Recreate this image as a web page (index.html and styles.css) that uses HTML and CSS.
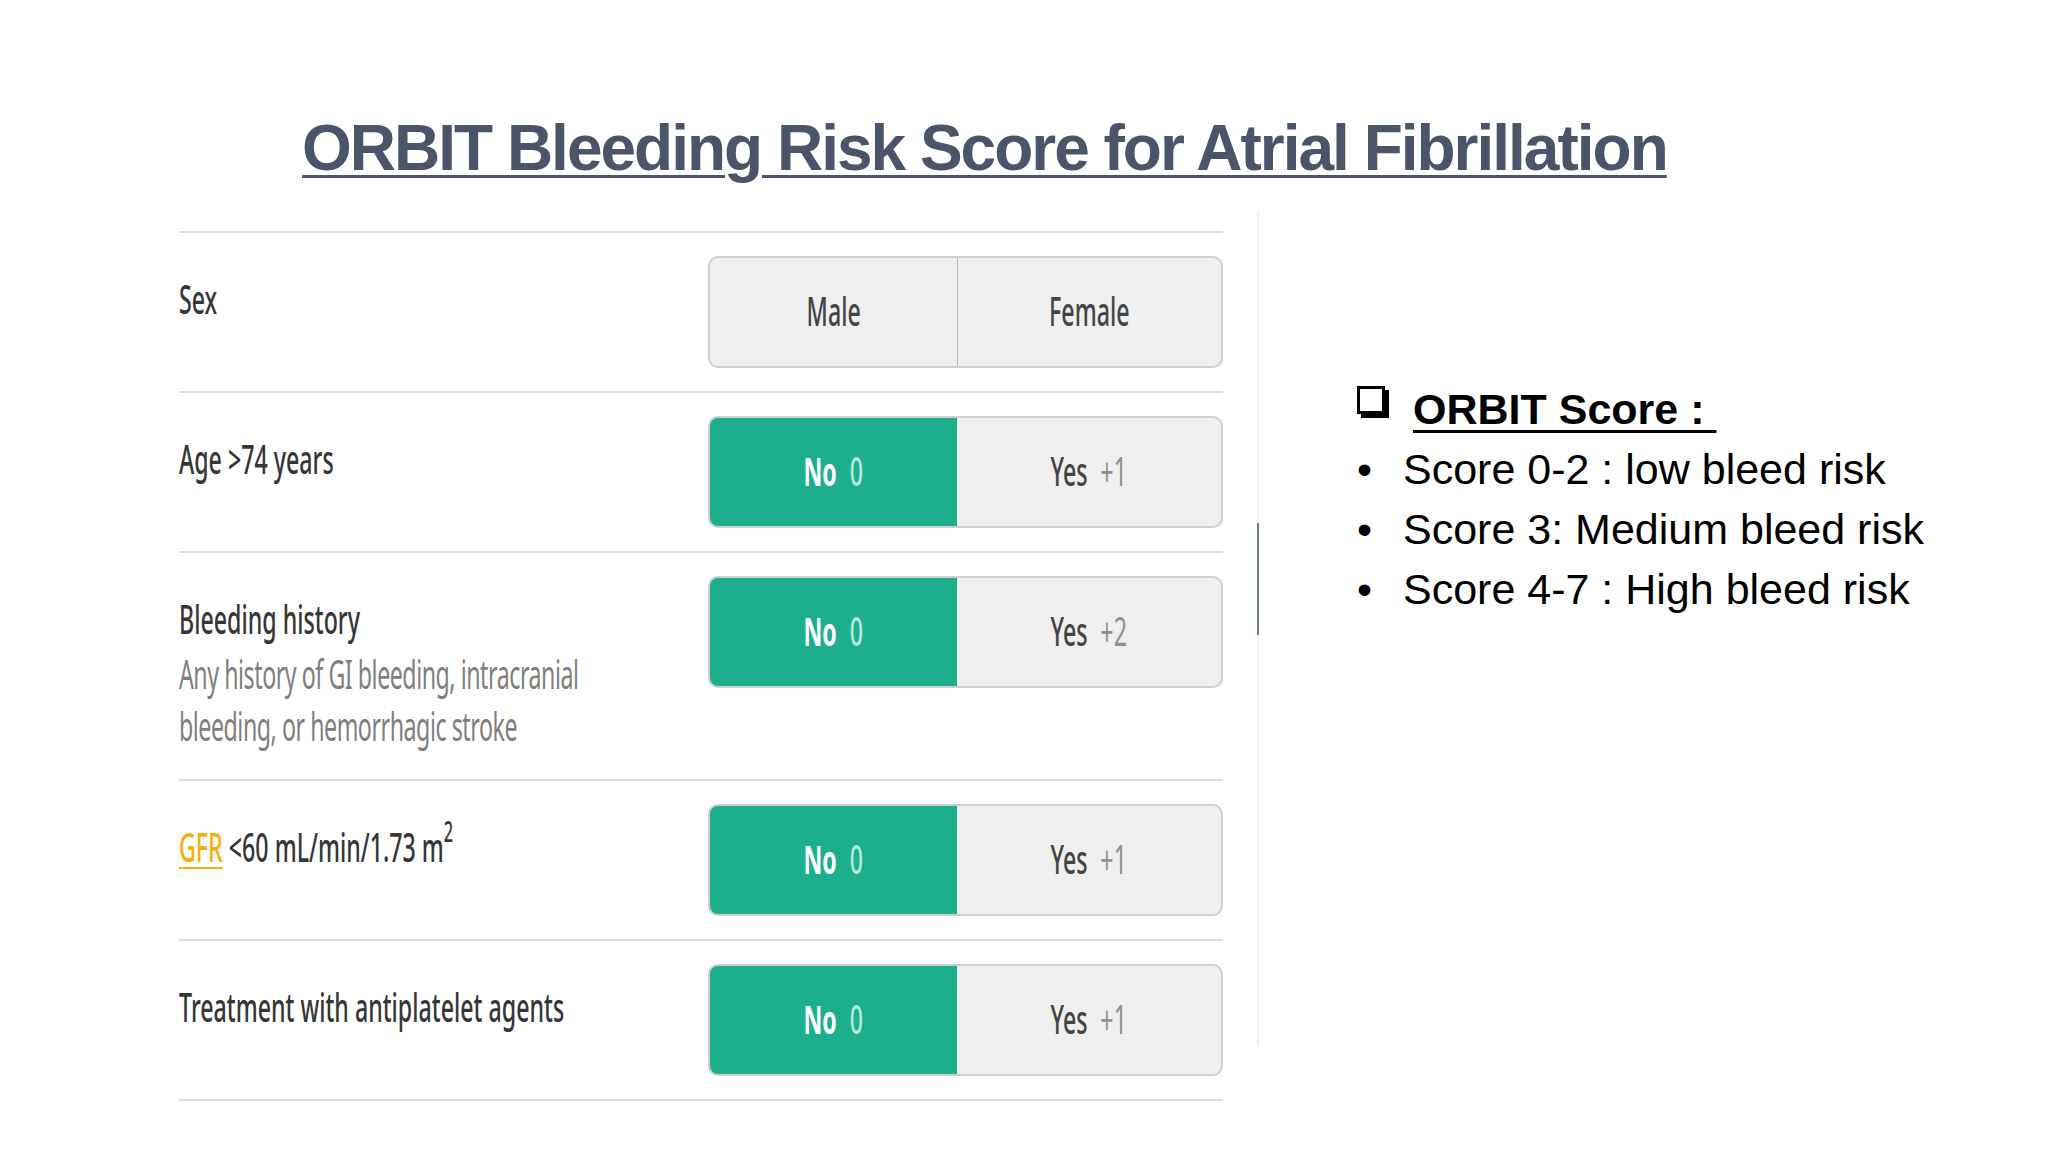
FILE: index.html
```html
<!DOCTYPE html>
<html lang="en">
<head>
<meta charset="utf-8">
<title>ORBIT Bleeding Risk Score for Atrial Fibrillation</title>
<link rel="stylesheet" href="styles.css">
</head>
<body>
<main class="slide">
  <h1 class="title">ORBIT Bleeding Risk Score for Atrial Fibrillation</h1>
  <div class="content">
    <section class="calc">
      <div class="row">
        <div class="label"><div class="name">Sex</div></div>
        <div class="toggle">
          <div class="opt"><span class="t">Male</span></div>
          <div class="opt sep"><span class="t">Female</span></div>
        </div>
      </div>
      <div class="row">
        <div class="label"><div class="name">Age &gt;74 years</div></div>
        <div class="toggle">
          <div class="opt on"><span class="t">No<span class="pts">0</span></span></div>
          <div class="opt"><span class="t">Yes<span class="pts">+1</span></span></div>
        </div>
      </div>
      <div class="row">
        <div class="label">
          <div class="name">Bleeding history</div>
          <div class="sub">Any history of GI bleeding, intracranial<br>bleeding, or hemorrhagic stroke</div>
        </div>
        <div class="toggle">
          <div class="opt on"><span class="t">No<span class="pts">0</span></span></div>
          <div class="opt"><span class="t">Yes<span class="pts">+2</span></span></div>
        </div>
      </div>
      <div class="row">
        <div class="label"><div class="name"><a class="link">GFR</a> &lt;60 mL/min/1.73 m<sup>2</sup></div></div>
        <div class="toggle">
          <div class="opt on"><span class="t">No<span class="pts">0</span></span></div>
          <div class="opt"><span class="t">Yes<span class="pts">+1</span></span></div>
        </div>
      </div>
      <div class="row">
        <div class="label"><div class="name">Treatment with antiplatelet agents</div></div>
        <div class="toggle">
          <div class="opt on"><span class="t">No<span class="pts">0</span></span></div>
          <div class="opt"><span class="t">Yes<span class="pts">+1</span></span></div>
        </div>
      </div>
    </section>
    <div class="divider"><span class="thumb"></span></div>
    <section class="notes">
      <h2 class="notes-head"><span class="box"></span><span class="u">ORBIT Score :&nbsp;</span></h2>
      <ul class="list">
        <li><span class="dot">•</span><span>Score 0-2 : low bleed risk</span></li>
        <li><span class="dot">•</span><span>Score 3: Medium bleed risk</span></li>
        <li><span class="dot">•</span><span>Score 4-7 : High bleed risk</span></li>
      </ul>
    </section>
  </div>
</main>
</body>
</html>
```
FILE: styles.css
```css
html, body {
  margin: 0;
  background: #ffffff;
}
body {
  width: 2048px;
  height: 1152px;
  overflow: hidden;
}
.slide {
  width: 2048px;
  height: 1152px;
}
.title {
  margin: 0;
  padding: 116px 0 0 302px;
  font-family: "Liberation Sans", Arial, sans-serif;
  font-weight: 700;
  font-size: 64px;
  line-height: 64px;
  letter-spacing: -2px;
  color: #4b5569;
  text-decoration: underline;
  text-decoration-thickness: 3px;
  text-underline-offset: 5px;
}
.content {
  display: flex;
  align-items: flex-start;
  margin-top: 31px;
  padding-left: 179px;
}
.calc {
  width: 1044px;
  margin-top: 20px;
  border-bottom: 2px solid #dedede;
  font-family: "Noto Sans", "Open Sans", sans-serif;
}
.row {
  display: flex;
  align-items: flex-start;
  border-top: 2px solid #dedede;
}
.label {
  flex: 1 1 0;
  min-width: 0;
  padding: 38px 0 27px;
  font-size: 40px;
  line-height: 55px;
  color: #363636;
  white-space: nowrap;
  transform: scaleX(0.58);
  transform-origin: 0 0;
}
.name {
  font-weight: 500;
}
.sub {
  margin-top: 2px;
  line-height: 52px;
  letter-spacing: -0.8px;
  color: #7f7f7f;
}
.link {
  color: #f2b10c;
  text-decoration: underline;
  text-decoration-thickness: 2px;
  text-underline-offset: 5px;
}
sup {
  font-size: 28px;
  line-height: 0;
  vertical-align: 20px;
}
.toggle {
  flex: 0 0 auto;
  display: flex;
  box-sizing: border-box;
  width: 515px;
  height: 112px;
  margin: 23px 0;
  border: 2px solid #cfcfcf;
  border-radius: 10px;
  overflow: hidden;
  background: #efefef;
}
.opt {
  display: flex;
  align-items: center;
  justify-content: center;
  padding-bottom: 4px;
  box-sizing: border-box;
  font-size: 40px;
  font-weight: 500;
  color: #444444;
}
.opt:first-child {
  width: 247px;
}
.opt:last-child {
  flex: 1;
}
.t {
  display: inline-block;
  white-space: nowrap;
  transform: scaleX(0.58);
}
.sep {
  border-left: 1px solid #bdbdbd;
}
.on {
  background: #1dae8d;
  color: #ffffff;
  font-weight: 700;
}
.pts {
  margin-left: 22px;
  color: #8f8f8f;
  font-weight: 400;
}
.on .pts {
  color: #b2eadb;
  font-weight: 500;
}
.divider {
  width: 2px;
  height: 835px;
  margin-left: 34px;
  background: #f1f1f1;
}
.thumb {
  display: block;
  height: 112px;
  margin-top: 312px;
  background: #6a7d96;
}
.notes {
  margin: 168px 0 0 98px;
  font-family: "Liberation Sans", Arial, sans-serif;
  font-size: 43px;
  line-height: 60px;
  color: #000000;
}
.notes-head {
  margin: 0;
  font-size: 43px;
  line-height: 60px;
  font-weight: 700;
}
.box {
  display: inline-block;
  width: 22px;
  height: 22px;
  border: 3px solid #000000;
  box-shadow: 4px 4px 0 #000000;
  vertical-align: 10px;
  margin-right: 28px;
}
.u {
  text-decoration: underline;
  text-decoration-thickness: 3px;
  text-underline-offset: 6px;
}
.list {
  list-style: none;
  margin: 0;
  padding: 0;
}
.list li {
  display: flex;
}
.dot {
  flex: 0 0 46px;
}
```
